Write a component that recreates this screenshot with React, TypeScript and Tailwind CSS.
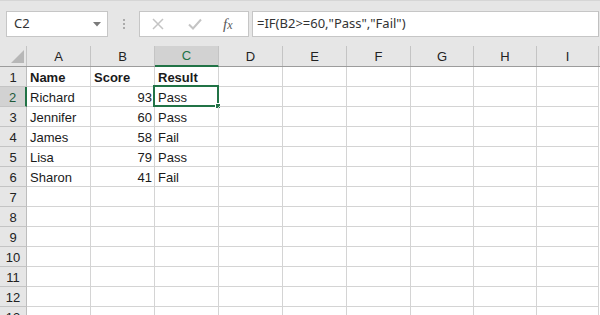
import React from "react";

const cols = ["A", "B", "C", "D", "E", "F", "G", "H", "I"];
const widths = ["w-[64px]", "w-[64px]", "w-[64px]", "w-[64px]", "w-[64px]", "w-[64px]", "w-[63px]", "w-[63px]", "w-[62px]"];

type Cell = { t: string; bold?: boolean; right?: boolean };
const data: Cell[][] = [
  [{ t: "Name", bold: true }, { t: "Score", bold: true }, { t: "Result", bold: true }],
  [{ t: "Richard" }, { t: "93", right: true }, { t: "Pass" }],
  [{ t: "Jennifer" }, { t: "60", right: true }, { t: "Pass" }],
  [{ t: "James" }, { t: "58", right: true }, { t: "Fail" }],
  [{ t: "Lisa" }, { t: "79", right: true }, { t: "Pass" }],
  [{ t: "Sharon" }, { t: "41", right: true }, { t: "Fail" }],
];

const font = "font-['Liberation_Sans',Arial,sans-serif]";

export default function App() {
  const rows = Array.from({ length: 13 }, (_, i) => i + 1);
  return (
    <div className={`w-[600px] h-[315px] overflow-hidden bg-white ${font} text-[13px] text-[#1a1a1a]`}>
      {/* top formula bar */}
      <div className="h-[46px] bg-[#e6e6e6] border-t border-[#d6d6d6] flex items-start pt-[10px] pl-[6px] pr-[1px]">
        <div className="w-[102px] h-[26px] bg-white border border-[#c6c6c6] flex items-center justify-between pl-[7px] pr-[6px]">
          <span className="font-['Noto_Sans',sans-serif] text-[13px] text-[#333]">C2</span>
          <svg width="8" height="5" viewBox="0 0 8 5"><path d="M0 0h8L4 4.5z" fill="#7a7a7a" /></svg>
        </div>
        <div className="w-[31px] h-[26px] flex flex-col items-center justify-center gap-[2px]">
          <div className="w-[2px] h-[2px] bg-[#ababab]" />
          <div className="w-[2px] h-[2px] bg-[#ababab]" />
          <div className="w-[2px] h-[2px] bg-[#ababab]" />
        </div>
        <div className="w-[110px] h-[26px] bg-white border border-[#c6c6c6] flex items-center">
          <svg width="12" height="12" viewBox="0 0 12 12" className="ml-[12px]">
            <path d="M1 1L11 11M11 1L1 11" stroke="#c4c4c4" strokeWidth="1.5" />
          </svg>
          <svg width="14" height="12" viewBox="0 0 14 12" className="ml-[24px]">
            <path d="M1 6.5L5 10.5L13 1.5" stroke="#c4c4c4" strokeWidth="2" fill="none" />
          </svg>
          <span className="ml-[21px] font-['Liberation_Serif',serif] italic text-[15px] text-[#5a5a5a] leading-none">
            f<span className="text-[12px]">x</span>
          </span>
        </div>
        <div className="flex-1 ml-[3px] h-[26px] bg-white border border-[#c6c6c6] border-r-[#c0c0c0] flex items-center pl-[4px]">
          <span className="font-['Noto_Sans',sans-serif] text-[13px] text-[#333] whitespace-pre">=IF(B2&gt;=60,"Pass","Fail")</span>
        </div>
      </div>

      {/* column headers */}
      <div className="flex h-[21px] bg-[#e6e6e6] border-b border-[#9c9c9c]">
        <div className="w-[27px] border-r border-[#c4c4c4] relative">
          <svg width="14" height="13" viewBox="0 0 14 13" className="absolute right-[1px] bottom-[3px]">
            <path d="M13 0V13H0z" fill="#b7b7b7" />
          </svg>
        </div>
        {cols.map((c, i) => (
          <div
            key={c}
            className={`${widths[i]} border-r border-[#c4c4c4] flex items-center justify-center pt-[1px] ${
              c === "C" ? "bg-[#d2d2d2] text-[#217346] border-b-2 border-b-[#217346] -mb-[1px]" : "text-[#222]"
            }`}
          >
            {c}
          </div>
        ))}
      </div>

      {/* rows */}
      {rows.map((r) => (
        <div key={r} className="flex h-[20px]">
          <div
            className={`w-[27px] border-b border-[#c4c4c4] flex items-end justify-center pb-[1px] leading-[15px] ${
              r === 2 ? "bg-[#d2d2d2] border-r-2 border-r-[#217346] text-[#1f5a3a]" : "bg-[#e6e6e6] border-r border-r-[#bdbdbd] text-[#222]"
            }`}
          >
            {r}
          </div>
          {cols.map((c, ci) => {
            const cell = data[r - 1]?.[ci];
            return (
              <div
                key={c}
                className={`${widths[ci]} border-r border-b border-[#d4d4d4] flex items-end pb-[1px] leading-[15px] relative ${
                  cell?.right ? "justify-end pr-[2px]" : "pl-[3px]"
                } ${cell?.bold ? "font-bold" : ""}`}
              >
                {cell?.t}
                {r === 2 && c === "C" && (
                  <>
                    <div className="absolute -left-[2px] -top-[2px] w-[66px] h-[22px] border-2 border-[#217346]" />
                    <div className="absolute -right-[3px] -bottom-[3px] w-[6px] h-[6px] bg-[#217346] border border-white" />
                  </>
                )}
              </div>
            );
          })}
        </div>
      ))}
    </div>
  );
}
